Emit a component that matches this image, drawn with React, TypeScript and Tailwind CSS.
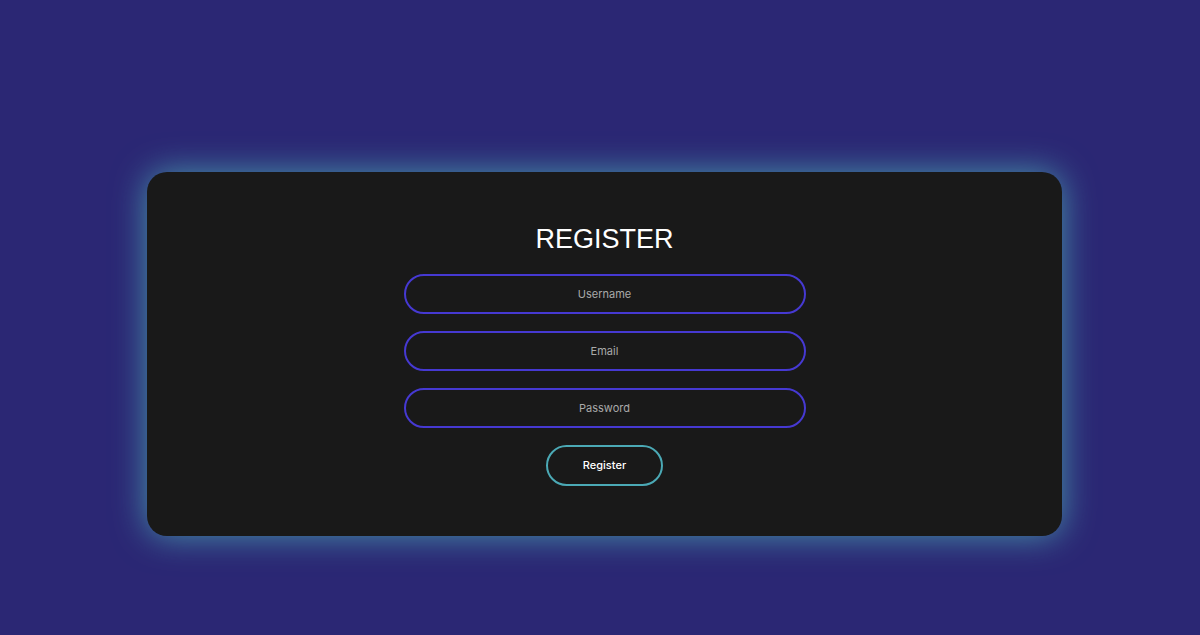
import React from 'react';

const fields = [
  { id: 'username', label: 'Username', type: 'text' },
  { id: 'email', label: 'Email', type: 'email' },
  { id: 'password', label: 'Password', type: 'password' },
];

export default function App() {
  return (
    <main className="min-h-screen bg-[#2b2774] pt-43 pr-[138px] pb-24 pl-[147px] font-['Inter',sans-serif]">
      <form
        onSubmit={(event) => event.preventDefault()}
        className="flex flex-col items-center rounded-[20px] bg-[#191919] px-6 py-[50px] shadow-[0_0_34px_#4aa3b0e0]"
      >
        <h1 className="mb-[18px] font-['Liberation_Sans',Arial,sans-serif] text-[27px] leading-[34px] text-white">REGISTER</h1>
        <div className="flex w-full max-w-[402px] flex-col gap-[17px]">
          {fields.map((field) => (
            <input
              key={field.id}
              id={field.id}
              type={field.type}
              aria-label={field.label}
              placeholder={field.label}
              className="h-10 w-full rounded-full border-2 border-[#4639d2] bg-transparent px-4 text-center text-[11px] text-white outline-none placeholder:text-[#a9a9a9]"
            />
          ))}
        </div>
        <button
          type="submit"
          className="mt-[17px] h-[41px] rounded-full border-2 border-[#4ba9b5] px-[35px] text-[11px] font-medium text-white"
        >
          Register
        </button>
      </form>
    </main>
  );
}
